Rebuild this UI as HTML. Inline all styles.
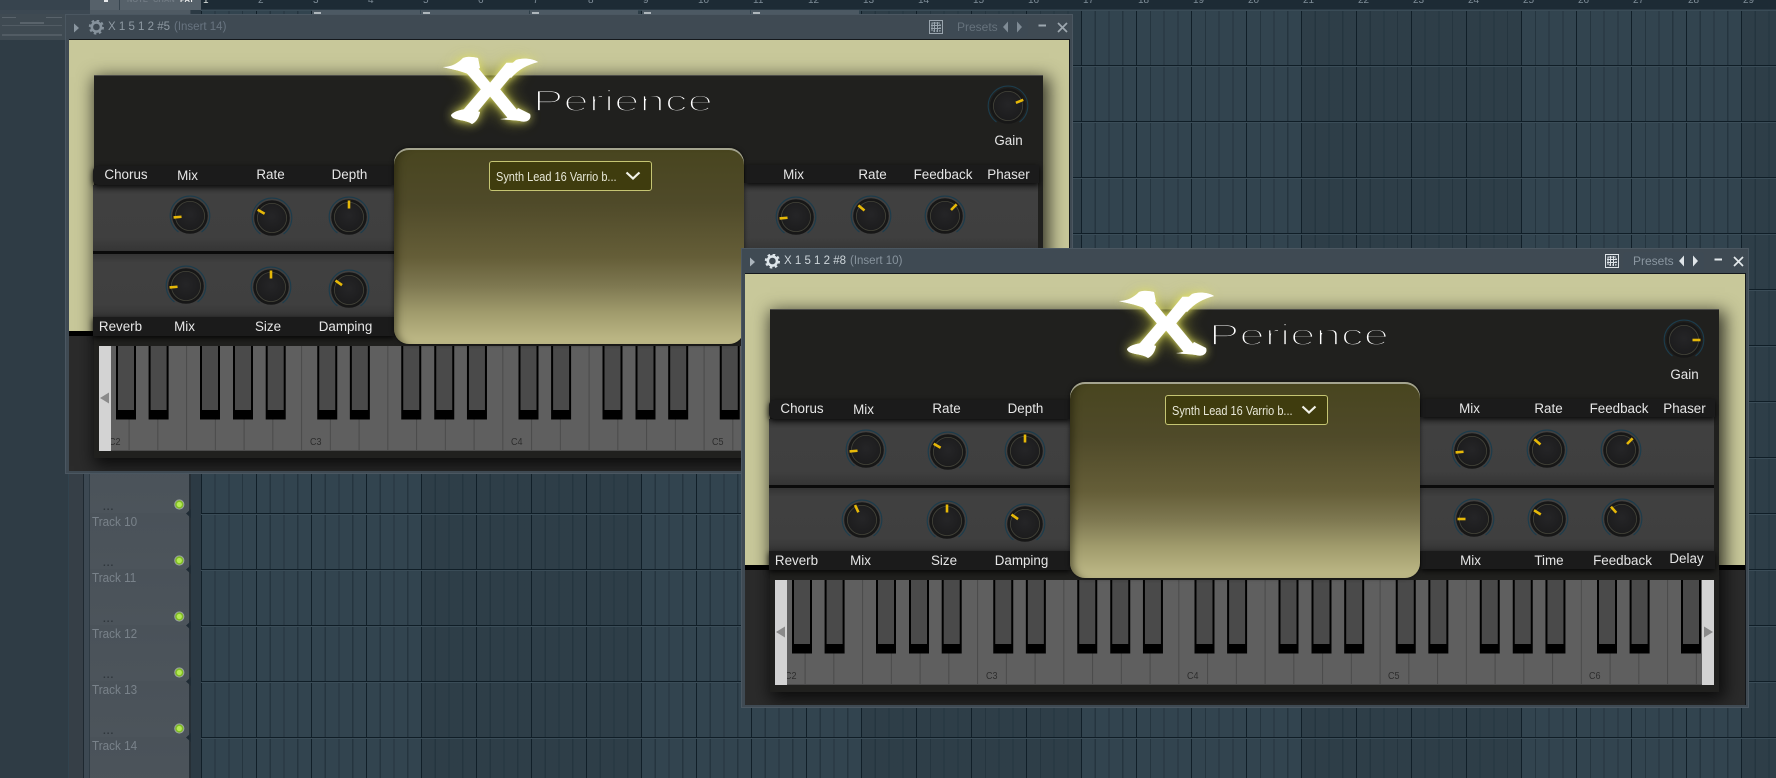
<!DOCTYPE html>
<html><head><meta charset="utf-8"><title>XPerience</title>
<style>
html,body{margin:0;padding:0;background:#31434e}
#root{position:relative;width:1776px;height:778px;overflow:hidden;font-family:"Liberation Sans",sans-serif;background:#31434e}
#root div,#root span,#root svg{position:absolute}
.grid{left:201px;top:10px;width:1575px;height:768px;background-color:#32444f;
background-image:repeating-linear-gradient(180deg,#3a4c57 0,#3a4c57 1px,transparent 1px,transparent 55px,#101e27 55px,#101e27 56px),
repeating-linear-gradient(90deg,#111f28 0,#111f28 1px,transparent 1px,transparent 55px),
repeating-linear-gradient(90deg,#25353f 0,#25353f 1px,transparent 1px,transparent 13.75px),
repeating-linear-gradient(90deg,transparent 0,transparent 220px,rgba(0,0,0,.09) 220px,rgba(0,0,0,.09) 440px)}
.num{top:-4px;font-size:10px;line-height:10px;color:#7f8d98}
.clip{top:10px;height:4px;width:108px;background:#4c5963}
.clip i{position:absolute;left:2px;top:2px;width:7px;height:2px;background:#aeb6bb}
.trk{left:90px;width:99px;height:56px;background:linear-gradient(180deg,#4a5259,#4c545b)}
.tl{left:92px;font-size:13px;line-height:16px;color:#79828a;transform:scaleX(.9);transform-origin:0 0;white-space:nowrap}
.dots{left:103px;font-size:10px;line-height:10px;color:#2f363c;letter-spacing:1px;font-weight:bold}
.frame{left:65px;top:14px;width:1006px;height:458px;background:#3f4a53;border:1px solid #4b5761}
.cont{left:69px;top:39px;width:1001px;height:432px;background:#c8c89a;overflow:hidden;border-top:1px solid #14181c;box-sizing:border-box;border-right:1px solid #14181c}
.below{left:0;top:291px;width:1001px;height:141px;background:#2b2b2b;border-top:5px solid #000}
.panel{left:25px;top:35px;width:949px;height:382px;background:#20201e;box-shadow:3px 5px 16px 3px rgba(0,0,0,.72);border-top:1px solid #4c4c48}
.t{color:#e6e6e6;font-size:13.4px;line-height:20px;transform:translateX(-50%);white-space:nowrap}
.body{background:linear-gradient(180deg,#343434 0,#404040 14%,#3f3f3f 80%,#353535 100%)}
.hd{background:#1b1b1b;box-shadow:0 2px 6px rgba(0,0,0,.85)}
.disp{left:394px;top:148px;width:350px;height:196px;border-radius:15px;
background:linear-gradient(180deg,#48451f 0,#4f4a29 28%,#655e38 56%,#7d7750 70%,#a09b6c 84%,#bfba88 100%);
box-shadow:inset 0 2px 0 #a4a48f,inset 8px 0 8px -5px rgba(25,24,8,.55),0 0 5px rgba(0,0,0,.6)}
.dd{left:489px;top:161px;width:163px;height:30px;background:#3f3c0e;border:1px solid #c5c573;border-radius:3px;box-sizing:border-box}
.ddt{left:496px;top:167px;font-size:13px;line-height:20px;color:#e8e8d8;transform:scaleX(.844);transform-origin:0 0;white-space:nowrap}
.kb{left:99px;top:346px;width:939px;height:105px;overflow:hidden;background-color:#5f5f5f;
background-image:linear-gradient(90deg,#4a4a4a 0,#4a4a4a 1px,transparent 1px);background-size:28.75px 100%;background-position:.85px 0}
.kbb{left:99px;top:450px;width:939px;height:1px;background:#4c4c4c}
.bar{top:346px;width:12px;height:105px;background:#d3d3d3}
.ck{top:437px;font-size:10px;line-height:12px;color:#2d2d2d;transform:scaleX(.9);transform-origin:0 0}
.ttl{top:19px;font-size:11.5px;line-height:16px;white-space:nowrap}
.pill{left:947px;top:18px;width:81px;height:19px;border-radius:3px;background:#3e4a54}
.xl{font-family:"Liberation Sans",sans-serif;font-weight:bold;font-size:82px;line-height:82px;color:#fff;left:490px;top:51px;transform:translateX(-50%) scaleX(1.3);text-shadow:0 0 6px rgba(232,232,110,.85),0 0 15px rgba(200,200,60,.75)}
.kn path{stroke:#e6b808;stroke-width:2.6}
.sw{filter:drop-shadow(0 0 5px rgba(232,232,110,.8))}
</style></head><body>
<div id="root">
<svg width="0" height="0" style="left:0;top:0">
<defs>
<radialGradient id="kg" cx=".5" cy=".45" r=".6"><stop offset="0" stop-color="#252527"/><stop offset="1" stop-color="#1b1b1c"/></radialGradient>
<g id="k">
<path d="M-11.5 16 A19.8 19.8 0 1 1 11.5 16" fill="none" style="stroke:#1c3c4c;stroke-width:1.1"/>
<circle r="17.8" fill="#171717"/>
<circle r="14.6" fill="url(#kg)" stroke="#44443a" stroke-width=".8"/>
</g>
<g id="bk"><rect width="20" height="73.5" fill="#000"/><rect x="2" width="16" height="64" fill="#4a4a4a"/></g>
<g id="oct"><use href="#bk" x="0"/><use href="#bk" x="32.6"/><use href="#bk" x="84"/><use href="#bk" x="117"/><use href="#bk" x="149.7"/></g>
<g id="gear"><circle r="4.6" fill="none" stroke-width="2.6" stroke="currentColor"/><circle r="6.6" fill="none" stroke="currentColor" stroke-width="2" stroke-dasharray="2.6 2.58"/></g>
<g id="logo" fill="#fff"><path d="M443 67C452 67 458 63 463 58C468 56 474 57 478 58L480 68L468 74C458 70 450 69 443 67Z"/><path d="M538 62C531 58 522 58 516 60L502 72L511 78C519 69 527 65 538 62Z"/><path d="M451 115C455 110 463 110 469 108L480 112C479 118 476 122 472 124C465 119 452 121 451 115Z"/><path d="M500 119C508 119 514 115 518 108L530 114C532 120 526 123 520 121C514 120 507 120 500 119Z"/></g>
</defs></svg>

<!-- top chrome -->
<div style="left:0;top:0;width:201px;height:10px;background:#37444e"></div>
<div style="left:90px;top:0;width:29px;height:10px;background:#56616a"></div>
<div style="left:104px;top:0;width:4px;height:2px;background:#e8eaec"></div>
<div style="left:120px;top:0;width:81px;height:10px;background:#56616a"></div>
<span style="left:127px;top:-5px;font-size:7.5px;line-height:9px;color:#707a83;font-weight:bold;white-space:nowrap">NOTE</span>
<span style="left:153px;top:-5px;font-size:7.5px;line-height:9px;color:#707a83;font-weight:bold;white-space:nowrap">CHAN</span>
<span style="left:180px;top:-5px;font-size:7.5px;line-height:9px;color:#f0f0f0;font-weight:bold;white-space:nowrap">PAT</span>
<div style="left:0;top:10px;width:201px;height:4px;background:#3c4852"></div>
<div style="left:90px;top:10px;width:100px;height:4px;background:#4f5a63"></div>
<div style="left:0;top:14px;width:65px;height:26px;background:#3f4a52"></div>
<div style="left:0;top:40px;width:68px;height:738px;background:#2f3c45"></div>
<div style="left:2px;top:17px;width:14px;height:1px;background:#59636b"></div>
<div style="left:20px;top:22px;width:24px;height:2px;background:#59636b"></div>
<div style="left:46px;top:17px;width:16px;height:1px;background:#59636b"></div>
<div style="left:2px;top:25px;width:60px;height:1px;background:#525c64"></div>
<div style="left:2px;top:34px;width:60px;height:2px;background:#525c64"></div>

<!-- grid -->
<div class="grid"></div>
<div style="left:191px;top:10px;width:10px;height:768px;background:#2c3a44"></div>

<!-- ruler -->
<div style="left:201px;top:0;width:1575px;height:9px;background:#1d2b35;border-bottom:1px solid #2b3a45"></div>
<span class="num" style="left:203px;color:#dfe4e0">1</span><span class="num" style="left:258px">2</span><span class="num" style="left:313px">3</span><span class="num" style="left:368px">4</span><span class="num" style="left:423px">5</span><span class="num" style="left:478px">6</span><span class="num" style="left:533px">7</span><span class="num" style="left:588px">8</span><span class="num" style="left:643px">9</span><span class="num" style="left:698px">10</span><span class="num" style="left:753px">11</span><span class="num" style="left:808px">12</span><span class="num" style="left:863px">13</span><span class="num" style="left:918px">14</span><span class="num" style="left:973px">15</span><span class="num" style="left:1028px">16</span><span class="num" style="left:1083px">17</span><span class="num" style="left:1138px">18</span><span class="num" style="left:1193px">19</span><span class="num" style="left:1248px">20</span><span class="num" style="left:1303px">21</span><span class="num" style="left:1358px">22</span><span class="num" style="left:1413px">23</span><span class="num" style="left:1468px">24</span><span class="num" style="left:1523px">25</span><span class="num" style="left:1578px">26</span><span class="num" style="left:1633px">27</span><span class="num" style="left:1688px">28</span><span class="num" style="left:1743px">29</span>

<div class="clip" style="left:312px"><i></i></div><div class="clip" style="left:421px"><i></i></div><div class="clip" style="left:530px"><i></i></div><div class="clip" style="left:642px"><i></i></div><div class="clip" style="left:751px"><i></i></div>

<!-- track column -->
<div style="left:69px;top:474px;width:14px;height:304px;background:#363f47"></div>
<div style="left:83px;top:474px;width:7px;height:304px;background:#2f3b44;border-left:1px solid #1e2830;box-sizing:border-box"></div>
<div style="left:84px;top:474px;width:5px;height:304px;background:#3d4953"></div>
<div class="trk" style="top:457px"></div><div class="trk" style="top:513px"></div><div class="trk" style="top:569px"></div><div class="trk" style="top:625px"></div><div class="trk" style="top:681px"></div><div class="trk" style="top:737px"></div>
<div style="left:189px;top:474px;width:2px;height:304px;background:#262f36"></div>
<svg style="left:0;top:0" width="260" height="778">
<g fill="#1f2b34"><path d="M186 513.5L191 509V518Z"/><path d="M186 569.5L191 565V574Z"/><path d="M186 625.5L191 621V630Z"/><path d="M186 681.5L191 677V686Z"/><path d="M186 737.5L191 733V742Z"/></g>
<g stroke="#9aa29f" stroke-width="1" fill="#7fbb24"><circle cx="179.3" cy="504.5" r="4.6"/><circle cx="179.3" cy="560.5" r="4.6"/><circle cx="179.3" cy="616.5" r="4.6"/><circle cx="179.3" cy="672.5" r="4.6"/><circle cx="179.3" cy="728.5" r="4.6"/></g>
<g fill="#b5ea55"><circle cx="179.3" cy="504.5" r="2.6"/><circle cx="179.3" cy="560.5" r="2.6"/><circle cx="179.3" cy="616.5" r="2.6"/><circle cx="179.3" cy="672.5" r="2.6"/><circle cx="179.3" cy="728.5" r="2.6"/></g>
</svg>
<span class="dots" style="top:503px">...</span><span class="dots" style="top:559px">...</span><span class="dots" style="top:615px">...</span><span class="dots" style="top:671px">...</span><span class="dots" style="top:727px">...</span>
<span class="tl" style="top:514px">Track 10</span><span class="tl" style="top:570px">Track 11</span><span class="tl" style="top:626px">Track 12</span><span class="tl" style="top:682px">Track 13</span><span class="tl" style="top:738px">Track 14</span>

<!-- WINDOW 1 -->
<div style="left:0;top:0">
<div class="frame"></div>
<svg style="left:70px;top:20px;color:#86929c" width="40" height="16"><path d="M4 3.5L9 8L4 12.5Z" fill="#8a96a0"/><use href="#gear" x="26.4" y="7"/></svg>
<span class="ttl" style="left:108px;color:#8f9aa3">X 1 5 1 2 #5</span>
<span class="ttl" style="left:174px;color:#687480">(Insert 14)</span>
<svg style="left:929px;top:20px" width="14" height="14"><path d="M.5.5H13.5V13.5H.5Z" fill="none" stroke="#9aa5ae"/><path d="M3 3h8v8H3Z" fill="none" stroke="#9aa5ae" stroke-dasharray="2 1"/><path d="M2 5.5h10M2 8.5h10M5.5 2v10M8.5 2v10" stroke="#9aa5ae"/></svg>
<div class="pill"></div>
<span class="ttl" style="left:957px;color:#66727c;font-size:12px">Presets</span>
<svg style="left:1000px;top:20px" width="72" height="15"><path d="M8 1.5V12.5L3 7Z" fill="#7f8b95"/><path d="M17 1.5V12.5L22 7Z" fill="#7f8b95"/><path d="M38.5 5.5H46" stroke="#9ea8b0" stroke-width="2"/><path d="M58 3L67 12M67 3L58 12" stroke="#9ea8b0" stroke-width="1.7"/></svg>
<div class="cont"><div class="below"></div></div>
<div style="left:69px;top:40px;width:1000px;height:431px;overflow:hidden"><div class="panel"></div></div>
<div class="kb"><svg style="left:0;top:0" width="939" height="105"><use href="#oct" x="17"/><use href="#oct" x="218.25"/><use href="#oct" x="419.5"/><use href="#oct" x="620.75"/><use href="#oct" x="822"/></svg>
<span class="ck" style="left:10px;top:91px">C2</span><span class="ck" style="left:211px;top:91px">C3</span><span class="ck" style="left:412px;top:91px">C4</span><span class="ck" style="left:613px;top:91px">C5</span><span class="ck" style="left:814px;top:91px">C6</span></div>
<div class="kbb"></div>
<div class="bar" style="left:99px"></div><div class="bar" style="left:1026px"></div>
<svg style="left:99px;top:390px" width="12" height="16"><path d="M1 8L10 2.5V13.5Z" fill="#8a8a8a"/></svg>
<svg style="left:1026px;top:390px" width="12" height="16"><path d="M11 8L2 2.5V13.5Z" fill="#8a8a8a"/></svg>
<!-- sections -->
<div class="body" style="left:93px;top:185px;width:301px;height:66px"></div>
<div style="left:93px;top:251px;width:301px;height:3px;background:#0b0b0b"></div>
<div class="body" style="left:93px;top:254px;width:301px;height:63px"></div>
<div class="hd" style="left:93px;top:166px;width:301px;height:19px;border-radius:5px 0 0 5px"></div>
<div class="hd" style="left:93px;top:317px;width:301px;height:19px"></div>
<div class="body" style="left:744px;top:183px;width:294px;height:68px"></div>
<div style="left:744px;top:251px;width:294px;height:3px;background:#0b0b0b"></div>
<div class="body" style="left:744px;top:254px;width:294px;height:63px"></div>
<div class="hd" style="left:745px;top:165px;width:294px;height:18px"></div>
<div class="hd" style="left:745px;top:317px;width:294px;height:18px"></div>
<div class="disp"></div>
<div class="dd"></div><span class="ddt">Synth Lead 16 Varrio b...</span>
<svg style="left:625px;top:170px" width="16" height="12"><path d="M1.5 2.5L8 8.5L14.5 2.5" fill="none" stroke="#f2f2e8" stroke-width="2.2"/></svg>
<span class="t" style="left:126px;top:165px">Chorus</span><span class="t" style="left:187.5px;top:166px">Mix</span><span class="t" style="left:270.5px;top:165px">Rate</span><span class="t" style="left:349.5px;top:165px">Depth</span>
<span class="t" style="left:793.5px;top:165px">Mix</span><span class="t" style="left:872.5px;top:165px">Rate</span><span class="t" style="left:943px;top:165px">Feedback</span><span class="t" style="left:1008.5px;top:165px">Phaser</span>
<span class="t" style="left:1008.5px;top:131px">Gain</span>
<span class="t" style="left:120.5px;top:317px">Reverb</span><span class="t" style="left:184.5px;top:317px">Mix</span><span class="t" style="left:268px;top:317px">Size</span><span class="t" style="left:345.5px;top:317px">Damping</span>
<svg style="left:0;top:0" width="1072" height="470">
<g class="kn" transform="translate(190 216)"><use href="#k"/><path d="M0-8.5V-16.5" transform="rotate(-95)"/></g>
<g class="kn" transform="translate(272 218)"><use href="#k"/><path d="M0-8.5V-16.5" transform="rotate(-60)"/></g>
<g class="kn" transform="translate(349 217)"><use href="#k"/><path d="M0-8.5V-16.5"/></g>
<g class="kn" transform="translate(186 286)"><use href="#k"/><path d="M0-8.5V-16.5" transform="rotate(-95)"/></g>
<g class="kn" transform="translate(271 287)"><use href="#k"/><path d="M0-8.5V-16.5"/></g>
<g class="kn" transform="translate(349 290)"><use href="#k"/><path d="M0-8.5V-16.5" transform="rotate(-55)"/></g>
<g class="kn" transform="translate(796 217)"><use href="#k"/><path d="M0-8.5V-16.5" transform="rotate(-95)"/></g>
<g class="kn" transform="translate(871 216)"><use href="#k"/><path d="M0-8.5V-16.5" transform="rotate(-50)"/></g>
<g class="kn" transform="translate(945 216)"><use href="#k"/><path d="M0-8.5V-16.5" transform="rotate(45)"/></g>
<g class="kn" transform="translate(1008 106)"><use href="#k"/><path d="M0-8.5V-16.5" transform="rotate(68)"/></g>
</svg>
<svg style="left:0;top:0" width="760" height="160"><use href="#logo" class="sw"/></svg>
<span class="xl">X</span>
<svg style="left:0;top:0" width="760" height="160"><use href="#logo"/><text x="533" y="111" font-family="Liberation Sans" font-size="30" fill="#fff" stroke="#20201e" stroke-width="1.7" textLength="180" lengthAdjust="spacingAndGlyphs">Perience</text></svg>
</div>

<!-- WINDOW 2 -->
<div style="left:676px;top:234px">
<div class="frame"></div>
<svg style="left:70px;top:20px;color:#dde5ea" width="40" height="16"><path d="M4 3.5L9 8L4 12.5Z" fill="#aab4bc"/><use href="#gear" x="26.4" y="7"/></svg>
<span class="ttl" style="left:108px;color:#cdd5da">X 1 5 1 2 #8</span>
<span class="ttl" style="left:174px;color:#87939d">(Insert 10)</span>
<svg style="left:929px;top:20px" width="14" height="14"><path d="M.5.5H13.5V13.5H.5Z" fill="none" stroke="#dde3e7"/><path d="M3 3h8v8H3Z" fill="none" stroke="#dde3e7" stroke-dasharray="2 1"/><path d="M2 5.5h10M2 8.5h10M5.5 2v10M8.5 2v10" stroke="#dde3e7"/></svg>
<div class="pill"></div>
<span class="ttl" style="left:957px;color:#8a96a0;font-size:12px">Presets</span>
<svg style="left:1000px;top:20px" width="72" height="15"><path d="M8 1.5V12.5L3 7Z" fill="#dfe5e9"/><path d="M17 1.5V12.5L22 7Z" fill="#dfe5e9"/><path d="M38.5 5.5H46" stroke="#e4e9ec" stroke-width="2"/><path d="M58 3L67 12M67 3L58 12" stroke="#e4e9ec" stroke-width="1.7"/></svg>
<div class="cont"><div class="below"></div></div>
<div style="left:69px;top:40px;width:1000px;height:431px;overflow:hidden"><div class="panel"></div></div>
<div class="kb"><svg style="left:0;top:0" width="939" height="105"><use href="#oct" x="17"/><use href="#oct" x="218.25"/><use href="#oct" x="419.5"/><use href="#oct" x="620.75"/><use href="#oct" x="822"/></svg>
<span class="ck" style="left:10px;top:91px">C2</span><span class="ck" style="left:211px;top:91px">C3</span><span class="ck" style="left:412px;top:91px">C4</span><span class="ck" style="left:613px;top:91px">C5</span><span class="ck" style="left:814px;top:91px">C6</span></div>
<div class="kbb"></div>
<div class="bar" style="left:99px"></div><div class="bar" style="left:1026px"></div>
<svg style="left:99px;top:390px" width="12" height="16"><path d="M1 8L10 2.5V13.5Z" fill="#8a8a8a"/></svg>
<svg style="left:1026px;top:390px" width="12" height="16"><path d="M11 8L2 2.5V13.5Z" fill="#8a8a8a"/></svg>
<div class="body" style="left:93px;top:185px;width:301px;height:66px"></div>
<div style="left:93px;top:251px;width:301px;height:3px;background:#0b0b0b"></div>
<div class="body" style="left:93px;top:254px;width:301px;height:63px"></div>
<div class="hd" style="left:93px;top:166px;width:301px;height:19px;border-radius:5px 0 0 5px"></div>
<div class="hd" style="left:93px;top:317px;width:301px;height:19px"></div>
<div class="body" style="left:744px;top:183px;width:294px;height:68px"></div>
<div style="left:744px;top:251px;width:294px;height:3px;background:#0b0b0b"></div>
<div class="body" style="left:744px;top:254px;width:294px;height:63px"></div>
<div class="hd" style="left:745px;top:165px;width:294px;height:18px"></div>
<div class="hd" style="left:745px;top:317px;width:294px;height:18px"></div>
<div class="disp"></div>
<div class="dd"></div><span class="ddt">Synth Lead 16 Varrio b...</span>
<svg style="left:625px;top:170px" width="16" height="12"><path d="M1.5 2.5L8 8.5L14.5 2.5" fill="none" stroke="#f2f2e8" stroke-width="2.2"/></svg>
<span class="t" style="left:126px;top:165px">Chorus</span><span class="t" style="left:187.5px;top:166px">Mix</span><span class="t" style="left:270.5px;top:165px">Rate</span><span class="t" style="left:349.5px;top:165px">Depth</span>
<span class="t" style="left:793.5px;top:165px">Mix</span><span class="t" style="left:872.5px;top:165px">Rate</span><span class="t" style="left:943px;top:165px">Feedback</span><span class="t" style="left:1008.5px;top:165px">Phaser</span>
<span class="t" style="left:1008.5px;top:131px">Gain</span>
<span class="t" style="left:120.5px;top:317px">Reverb</span><span class="t" style="left:184.5px;top:317px">Mix</span><span class="t" style="left:268px;top:317px">Size</span><span class="t" style="left:345.5px;top:317px">Damping</span>
<span class="t" style="left:794.5px;top:317px">Mix</span><span class="t" style="left:873px;top:317px">Time</span><span class="t" style="left:946.5px;top:317px">Feedback</span><span class="t" style="left:1010.5px;top:315px">Delay</span>
<svg style="left:0;top:0" width="1072" height="470">
<g class="kn" transform="translate(190 216)"><use href="#k"/><path d="M0-8.5V-16.5" transform="rotate(-95)"/></g>
<g class="kn" transform="translate(272 218)"><use href="#k"/><path d="M0-8.5V-16.5" transform="rotate(-60)"/></g>
<g class="kn" transform="translate(349 217)"><use href="#k"/><path d="M0-8.5V-16.5"/></g>
<g class="kn" transform="translate(186 286)"><use href="#k"/><path d="M0-8.5V-16.5" transform="rotate(-25)"/></g>
<g class="kn" transform="translate(271 287)"><use href="#k"/><path d="M0-8.5V-16.5"/></g>
<g class="kn" transform="translate(349 290)"><use href="#k"/><path d="M0-8.5V-16.5" transform="rotate(-55)"/></g>
<g class="kn" transform="translate(796 217)"><use href="#k"/><path d="M0-8.5V-16.5" transform="rotate(-95)"/></g>
<g class="kn" transform="translate(871 216)"><use href="#k"/><path d="M0-8.5V-16.5" transform="rotate(-50)"/></g>
<g class="kn" transform="translate(945 216)"><use href="#k"/><path d="M0-8.5V-16.5" transform="rotate(45)"/></g>
<g class="kn" transform="translate(798 285)"><use href="#k"/><path d="M0-8.5V-16.5" transform="rotate(-90)"/></g>
<g class="kn" transform="translate(872 285)"><use href="#k"/><path d="M0-8.5V-16.5" transform="rotate(-58)"/></g>
<g class="kn" transform="translate(946 285)"><use href="#k"/><path d="M0-8.5V-16.5" transform="rotate(-42)"/></g>
<g class="kn" transform="translate(1008 106)"><use href="#k"/><path d="M0-8.5V-16.5" transform="rotate(90)"/></g>
</svg>
<svg style="left:0;top:0" width="760" height="160"><use href="#logo" class="sw"/></svg>
<span class="xl">X</span>
<svg style="left:0;top:0" width="760" height="160"><use href="#logo"/><text x="533" y="111" font-family="Liberation Sans" font-size="30" fill="#fff" stroke="#20201e" stroke-width="1.7" textLength="180" lengthAdjust="spacingAndGlyphs">Perience</text></svg>
</div>
</div>
</body></html>
